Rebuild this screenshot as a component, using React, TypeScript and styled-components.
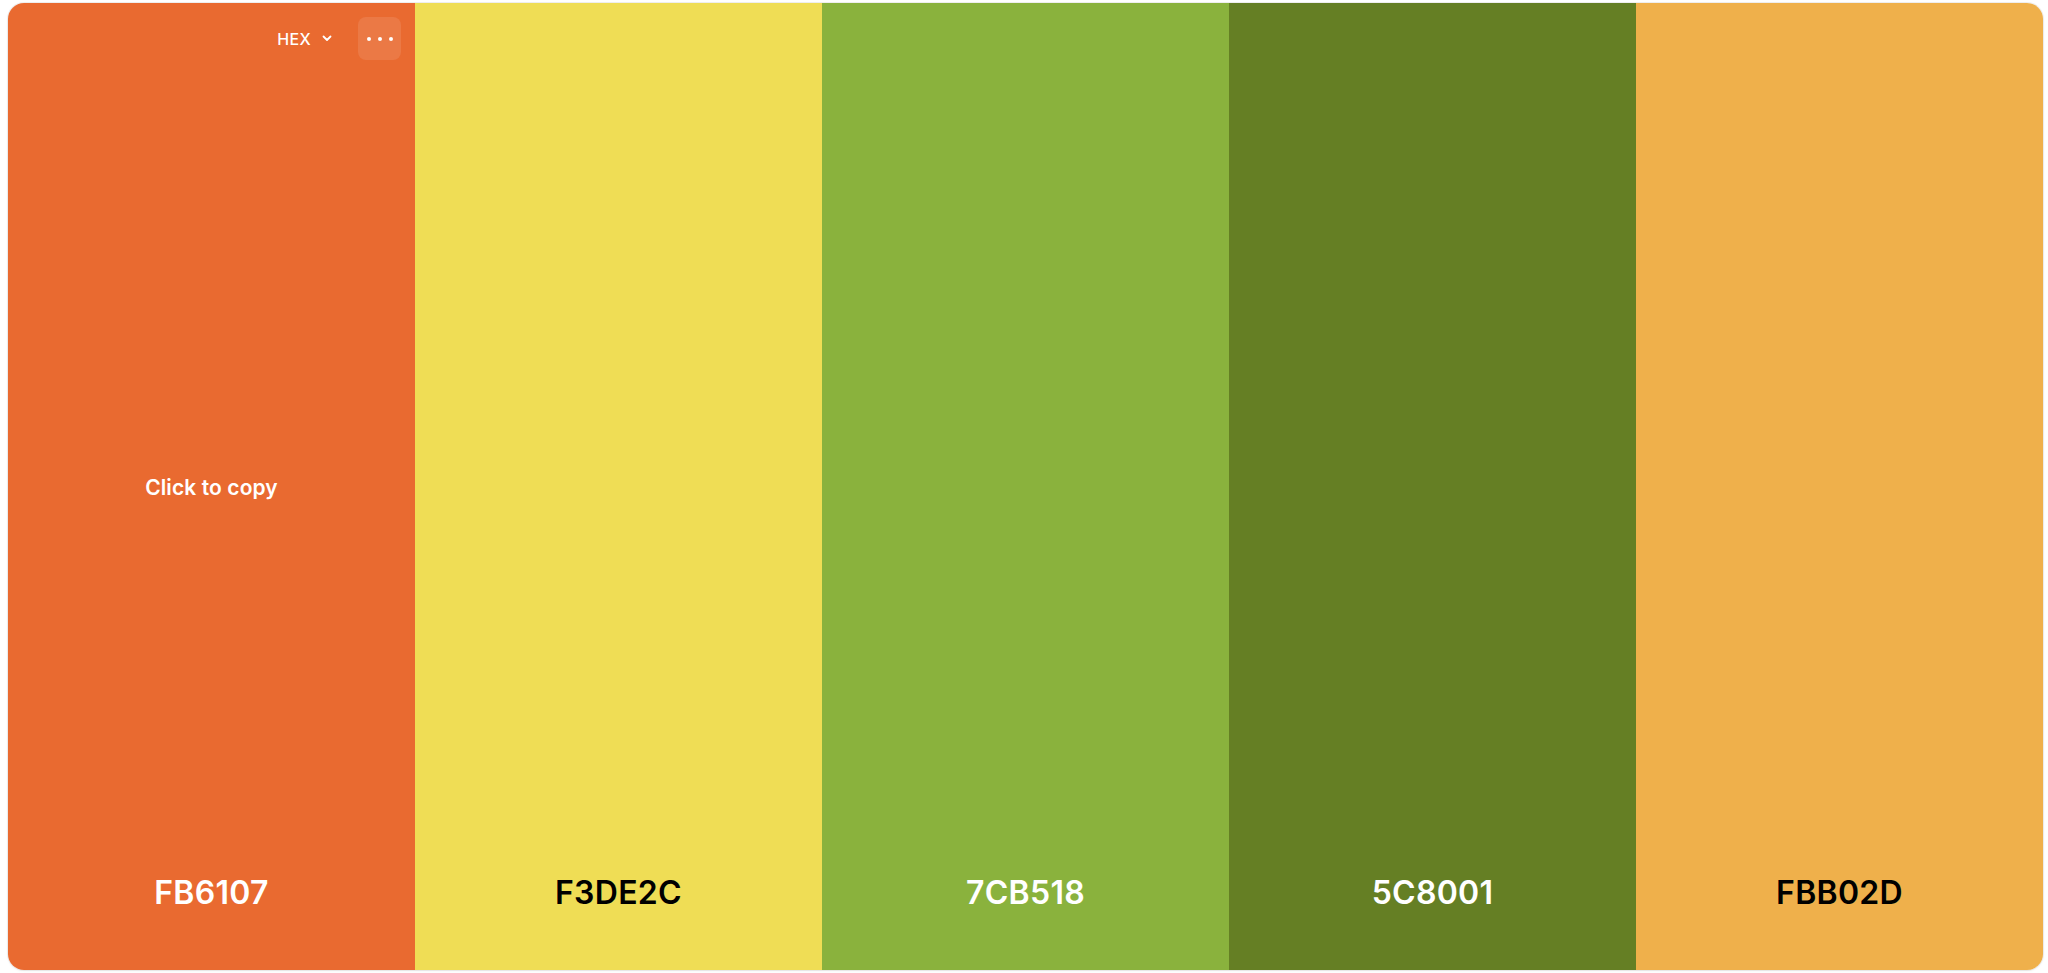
import React from 'react'
import styled, { createGlobalStyle } from 'styled-components'

type Swatch = {
	hex: string
	fill: string
	ink: string
}

const swatches: Swatch[] = [
	{ hex: 'FB6107', fill: '#e96a30', ink: '#ffffff' },
	{ hex: 'F3DE2C', fill: '#efdd55', ink: '#000000' },
	{ hex: '7CB518', fill: '#8ab23d', ink: '#ffffff' },
	{ hex: '5C8001', fill: '#657f24', ink: '#ffffff' },
	{ hex: 'FBB02D', fill: '#efb04b', ink: '#000000' },
]

const GlobalStyle = createGlobalStyle`
	html, body {
		margin: 0;
		padding: 0;
		background: #ffffff;
		font-family: Inter, 'Liberation Sans', sans-serif;
	}
	* {
		box-sizing: border-box;
	}
`

export default function App() {
	return (
		<>
			<GlobalStyle />
			<Page>
				<Palette>
					{swatches.map((swatch, i) => (
						<Column key={swatch.hex} $fill={swatch.fill} $ink={swatch.ink}>
							{i === 0 && (
								<>
									<Toolbar>
										<FormatSelect>
											HEX
											<svg width="10" height="7" viewBox="0 0 10 7" fill="none">
												<path
													d="M1.5 1.5L5 5L8.5 1.5"
													stroke="currentColor"
													strokeWidth="1.8"
													strokeLinecap="round"
													strokeLinejoin="round"
												/>
											</svg>
										</FormatSelect>
										<MoreButton>
											<Dot />
											<Dot />
											<Dot />
										</MoreButton>
									</Toolbar>
									<Hint>Click to copy</Hint>
								</>
							)}
							<HexLabel>{swatch.hex}</HexLabel>
						</Column>
					))}
				</Palette>
			</Page>
		</>
	)
}

const Page = styled.div`
	height: 973px;
	padding: 3px 5px 3px 8px;
	display: flex;
`

const Palette = styled.div`
	flex: 1;
	display: flex;
	border-radius: 16px;
	overflow: hidden;
	box-shadow: 0 0 0 1px rgba(0, 0, 0, 0.06), 0 1px 3px rgba(0, 0, 0, 0.06);
`

const Column = styled.div<{ $fill: string; $ink: string }>`
	position: relative;
	flex: 1;
	display: flex;
	flex-direction: column;
	justify-content: flex-end;
	align-items: center;
	padding-bottom: 58px;
	background: ${props => props.$fill};
	color: ${props => props.$ink};
	cursor: pointer;
`

const Toolbar = styled.div`
	position: absolute;
	top: 14px;
	right: 14px;
	display: flex;
	align-items: center;
	gap: 26px;
`

const FormatSelect = styled.div`
	display: flex;
	align-items: center;
	gap: 11px;
	font-size: 16px;
	font-weight: 500;
	letter-spacing: 0.3px;
`

const MoreButton = styled.div`
	width: 43px;
	height: 43px;
	border-radius: 8px;
	background: rgba(255, 255, 255, 0.1);
	display: flex;
	align-items: center;
	justify-content: center;
	gap: 7px;
`

const Dot = styled.span`
	width: 4px;
	height: 4px;
	border-radius: 50%;
	background: #ffffff;
`

const Hint = styled.div`
	position: absolute;
	inset: 0;
	display: flex;
	align-items: center;
	justify-content: center;
	padding-top: 2px;
	font-size: 21px;
	font-weight: 600;
	letter-spacing: 0.1px;
`

const HexLabel = styled.div`
	font-size: 32px;
	font-weight: 600;
	line-height: 39px;
	letter-spacing: 0.3px;
`
